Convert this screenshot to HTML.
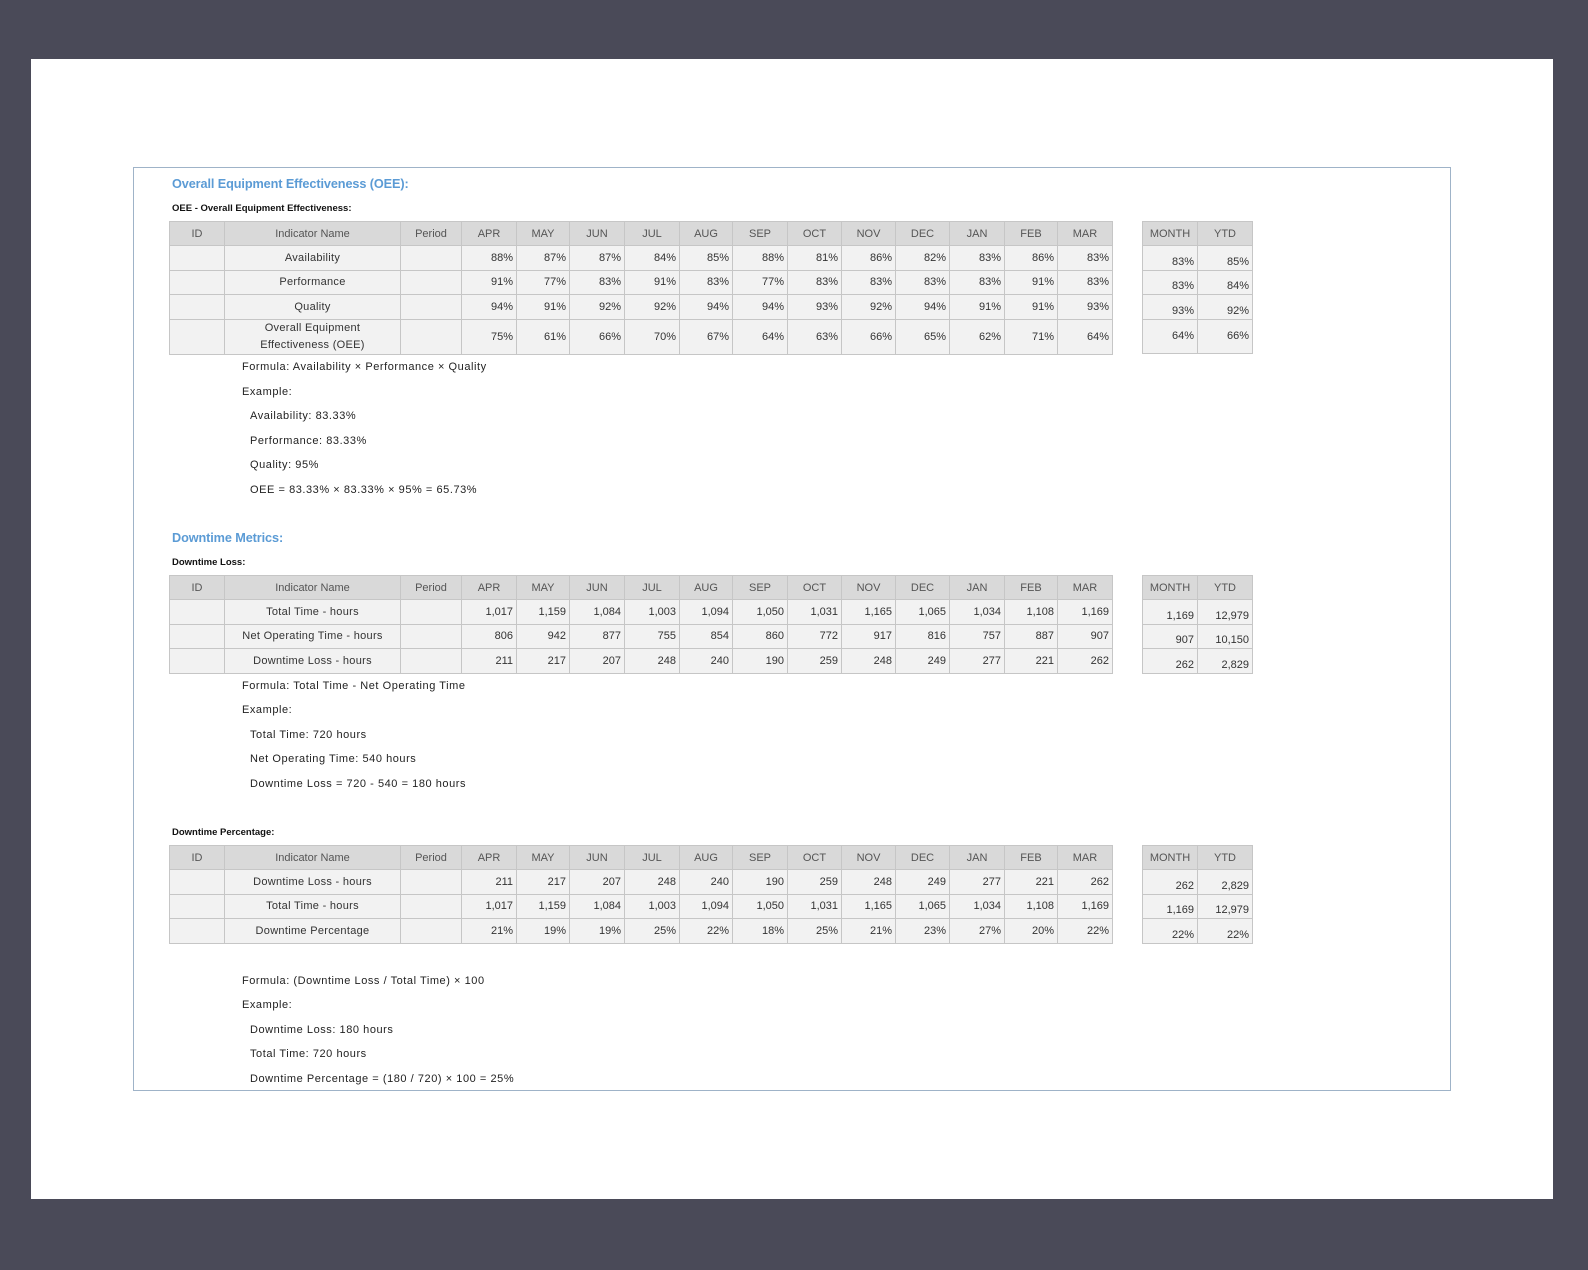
<!DOCTYPE html>
<html><head><meta charset="utf-8">
<style>
*{margin:0;padding:0;box-sizing:border-box}
html,body{width:1588px;height:1270px;overflow:hidden;background:#4a4a58;font-family:"Liberation Sans",Arial,sans-serif}
#page{position:absolute;left:31px;top:59px;width:1522px;height:1140px;background:#fff}
#frame{position:absolute;left:133px;top:167px;width:1318px;height:924px;border:1px solid #9fb3c8}
.abs{position:absolute;white-space:nowrap}
.h1{font-size:12.7px;font-weight:bold;color:#5b9bd5;letter-spacing:-0.1px}
.h2{font-size:9.5px;font-weight:bold;color:#111;letter-spacing:0}
.f{font-size:11px;color:#222;letter-spacing:0.55px}
table{position:absolute;border-collapse:collapse;table-layout:fixed;font-size:11px;color:#333}
td{border:1px solid #c6c6c6;background:#f2f2f2;text-align:right;padding:0 3px;white-space:nowrap;overflow:hidden}
tr.hd td{background:#d9d9d9;color:#555;text-align:center}
td.n{text-align:center;letter-spacing:0.3px}
table.side td{vertical-align:bottom;padding-bottom:2px}
table.side tr.hd td{vertical-align:middle;padding-bottom:0}
</style></head><body>
<div id="page"></div>
<div id="frame"></div>

<div class="abs h1" style="left:172px;top:177px">Overall Equipment Effectiveness (OEE):</div>
<div class="abs h2" style="left:172px;top:203px">OEE - Overall Equipment Effectiveness:</div>

<table style="left:169px;top:221px;width:943px">
<colgroup><col style="width:55px"><col style="width:176px"><col style="width:61px"><col style="width:55px"><col style="width:53px"><col style="width:55px"><col style="width:55px"><col style="width:53px"><col style="width:55px"><col style="width:54px"><col style="width:54px"><col style="width:54px"><col style="width:55px"><col style="width:53px"><col style="width:55px"></colgroup>
<tr class="hd" style="height:24px"><td>ID</td><td>Indicator Name</td><td>Period</td><td>APR</td><td>MAY</td><td>JUN</td><td>JUL</td><td>AUG</td><td>SEP</td><td>OCT</td><td>NOV</td><td>DEC</td><td>JAN</td><td>FEB</td><td>MAR</td></tr>
<tr style="height:24.5px"><td></td><td class="n">Availability</td><td></td><td>88%</td><td>87%</td><td>87%</td><td>84%</td><td>85%</td><td>88%</td><td>81%</td><td>86%</td><td>82%</td><td>83%</td><td>86%</td><td>83%</td></tr>
<tr style="height:24.5px"><td></td><td class="n">Performance</td><td></td><td>91%</td><td>77%</td><td>83%</td><td>91%</td><td>83%</td><td>77%</td><td>83%</td><td>83%</td><td>83%</td><td>83%</td><td>91%</td><td>83%</td></tr>
<tr style="height:24.5px"><td></td><td class="n">Quality</td><td></td><td>94%</td><td>91%</td><td>92%</td><td>92%</td><td>94%</td><td>94%</td><td>93%</td><td>92%</td><td>94%</td><td>91%</td><td>91%</td><td>93%</td></tr>
<tr style="height:34.5px"><td></td><td class="n" style="line-height:17px">Overall Equipment<br>Effectiveness (OEE)</td><td></td><td>75%</td><td>61%</td><td>66%</td><td>70%</td><td>67%</td><td>64%</td><td>63%</td><td>66%</td><td>65%</td><td>62%</td><td>71%</td><td>64%</td></tr>
</table>
<table class="side" style="left:1142px;top:221px;width:110px">
<colgroup><col style="width:55px"><col style="width:55px"></colgroup>
<tr class="hd" style="height:24px"><td>MONTH</td><td>YTD</td></tr>
<tr style="height:24.5px"><td>83%</td><td>85%</td></tr>
<tr style="height:24.5px"><td>83%</td><td>84%</td></tr>
<tr style="height:24.5px"><td>93%</td><td>92%</td></tr>
<tr style="height:34.5px"><td style="vertical-align:middle;padding-bottom:0">64%</td><td style="vertical-align:middle;padding-bottom:0">66%</td></tr>
</table>

<div class="abs f" style="left:242px;top:361px">Formula: Availability × Performance × Quality</div>
<div class="abs f" style="left:242px;top:386px">Example:</div>
<div class="abs f" style="left:250px;top:410px">Availability: 83.33%</div>
<div class="abs f" style="left:250px;top:435px">Performance: 83.33%</div>
<div class="abs f" style="left:250px;top:459px">Quality: 95%</div>
<div class="abs f" style="left:250px;top:484px">OEE = 83.33% × 83.33% × 95% = 65.73%</div>

<div class="abs h1" style="left:172px;top:531px">Downtime Metrics:</div>
<div class="abs h2" style="left:172px;top:557px">Downtime Loss:</div>

<table style="left:169px;top:575px;width:943px">
<colgroup><col style="width:55px"><col style="width:176px"><col style="width:61px"><col style="width:55px"><col style="width:53px"><col style="width:55px"><col style="width:55px"><col style="width:53px"><col style="width:55px"><col style="width:54px"><col style="width:54px"><col style="width:54px"><col style="width:55px"><col style="width:53px"><col style="width:55px"></colgroup>
<tr class="hd" style="height:24px"><td>ID</td><td>Indicator Name</td><td>Period</td><td>APR</td><td>MAY</td><td>JUN</td><td>JUL</td><td>AUG</td><td>SEP</td><td>OCT</td><td>NOV</td><td>DEC</td><td>JAN</td><td>FEB</td><td>MAR</td></tr>
<tr style="height:24.5px"><td></td><td class="n">Total Time - hours</td><td></td><td>1,017</td><td>1,159</td><td>1,084</td><td>1,003</td><td>1,094</td><td>1,050</td><td>1,031</td><td>1,165</td><td>1,065</td><td>1,034</td><td>1,108</td><td>1,169</td></tr>
<tr style="height:24.5px"><td></td><td class="n">Net Operating Time - hours</td><td></td><td>806</td><td>942</td><td>877</td><td>755</td><td>854</td><td>860</td><td>772</td><td>917</td><td>816</td><td>757</td><td>887</td><td>907</td></tr>
<tr style="height:24.5px"><td></td><td class="n">Downtime Loss - hours</td><td></td><td>211</td><td>217</td><td>207</td><td>248</td><td>240</td><td>190</td><td>259</td><td>248</td><td>249</td><td>277</td><td>221</td><td>262</td></tr>
</table>
<table class="side" style="left:1142px;top:575px;width:110px">
<colgroup><col style="width:55px"><col style="width:55px"></colgroup>
<tr class="hd" style="height:24px"><td>MONTH</td><td>YTD</td></tr>
<tr style="height:24.5px"><td>1,169</td><td>12,979</td></tr>
<tr style="height:24.5px"><td>907</td><td>10,150</td></tr>
<tr style="height:24.5px"><td>262</td><td>2,829</td></tr>
</table>

<div class="abs f" style="left:242px;top:680px">Formula: Total Time - Net Operating Time</div>
<div class="abs f" style="left:242px;top:704px">Example:</div>
<div class="abs f" style="left:250px;top:729px">Total Time: 720 hours</div>
<div class="abs f" style="left:250px;top:753px">Net Operating Time: 540 hours</div>
<div class="abs f" style="left:250px;top:778px">Downtime Loss = 720 - 540 = 180 hours</div>

<div class="abs h2" style="left:172px;top:827px">Downtime Percentage:</div>

<table style="left:169px;top:845px;width:943px">
<colgroup><col style="width:55px"><col style="width:176px"><col style="width:61px"><col style="width:55px"><col style="width:53px"><col style="width:55px"><col style="width:55px"><col style="width:53px"><col style="width:55px"><col style="width:54px"><col style="width:54px"><col style="width:54px"><col style="width:55px"><col style="width:53px"><col style="width:55px"></colgroup>
<tr class="hd" style="height:24px"><td>ID</td><td>Indicator Name</td><td>Period</td><td>APR</td><td>MAY</td><td>JUN</td><td>JUL</td><td>AUG</td><td>SEP</td><td>OCT</td><td>NOV</td><td>DEC</td><td>JAN</td><td>FEB</td><td>MAR</td></tr>
<tr style="height:24.5px"><td></td><td class="n">Downtime Loss - hours</td><td></td><td>211</td><td>217</td><td>207</td><td>248</td><td>240</td><td>190</td><td>259</td><td>248</td><td>249</td><td>277</td><td>221</td><td>262</td></tr>
<tr style="height:24.5px"><td></td><td class="n">Total Time - hours</td><td></td><td>1,017</td><td>1,159</td><td>1,084</td><td>1,003</td><td>1,094</td><td>1,050</td><td>1,031</td><td>1,165</td><td>1,065</td><td>1,034</td><td>1,108</td><td>1,169</td></tr>
<tr style="height:24.5px"><td></td><td class="n">Downtime Percentage</td><td></td><td>21%</td><td>19%</td><td>19%</td><td>25%</td><td>22%</td><td>18%</td><td>25%</td><td>21%</td><td>23%</td><td>27%</td><td>20%</td><td>22%</td></tr>
</table>
<table class="side" style="left:1142px;top:845px;width:110px">
<colgroup><col style="width:55px"><col style="width:55px"></colgroup>
<tr class="hd" style="height:24px"><td>MONTH</td><td>YTD</td></tr>
<tr style="height:24.5px"><td>262</td><td>2,829</td></tr>
<tr style="height:24.5px"><td>1,169</td><td>12,979</td></tr>
<tr style="height:24.5px"><td>22%</td><td>22%</td></tr>
</table>

<div class="abs f" style="left:242px;top:975px">Formula: (Downtime Loss / Total Time) × 100</div>
<div class="abs f" style="left:242px;top:999px">Example:</div>
<div class="abs f" style="left:250px;top:1024px">Downtime Loss: 180 hours</div>
<div class="abs f" style="left:250px;top:1048px">Total Time: 720 hours</div>
<div class="abs f" style="left:250px;top:1073px">Downtime Percentage = (180 / 720) × 100 = 25%</div>
</body></html>
